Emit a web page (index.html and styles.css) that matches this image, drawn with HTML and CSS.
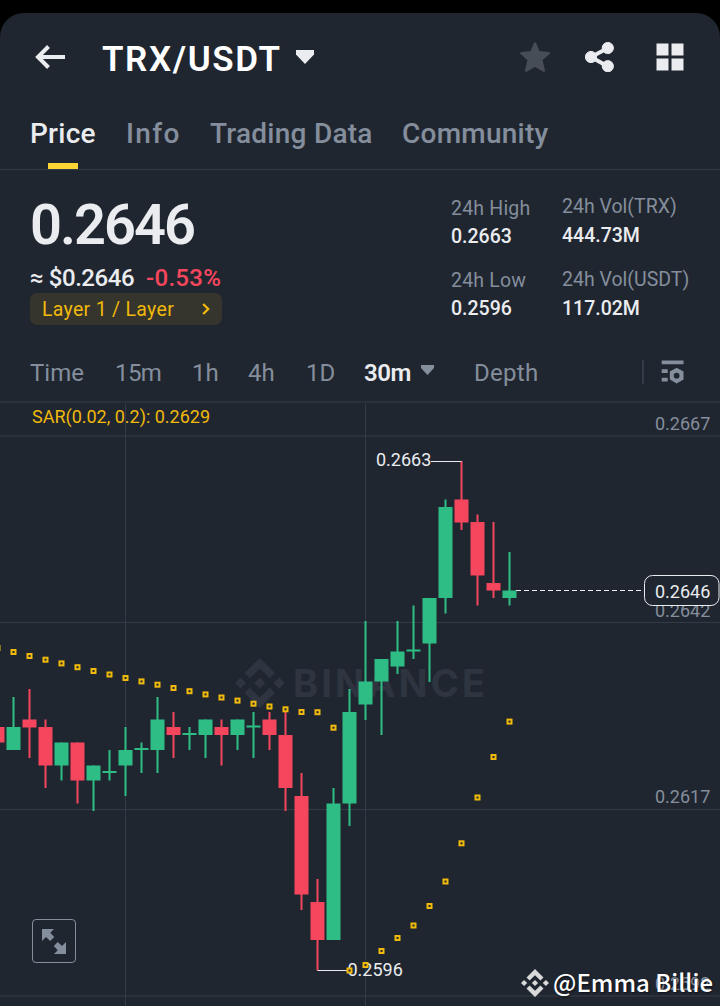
FILE: index.html
```html
<!DOCTYPE html>
<html lang="en">
<head>
  <meta charset="UTF-8">
  <title>TRX/USDT</title>
  <meta name="viewport" content="width=device-width, initial-scale=1">
  <link rel="stylesheet" href="styles.css">
</head>
<body>

  <main class="screen">
    <header class="header">
      <svg class="back" width="30" height="24" viewBox="0 0 30 24" fill="none" stroke="#eaecef" stroke-width="4">
        <path d="M30 12H3M13.5 1.5L3 12L13.5 22.5"/>
      </svg>
      <h1 class="pair">TRX/USDT</h1>
      <svg class="pair-arrow" width="18" height="14" viewBox="0 0 18 14" fill="#eaecef">
        <path d="M0 0H18V4.5L9 14L0 4.5Z"/>
      </svg>
      <div class="actions">
        <svg width="30" height="30" viewBox="0 0 30 30" fill="#474d57" stroke="#474d57" stroke-width="2.4" stroke-linejoin="round">
          <path d="M15 1.5L18.7 10.1L28.7 11.2L21.3 17.7L23.8 28.6L15 23.4L6.2 28.6L8.7 17.7L1.3 11.2L11.3 10.1Z"/>
        </svg>
        <svg width="30" height="30" viewBox="0 0 30 30" fill="#eaecef" stroke="#eaecef">
          <path d="M23 6L6 15L23 24.5" fill="none" stroke-width="4"/>
          <circle cx="22.8" cy="6" r="5.6"/>
          <circle cx="6" cy="15" r="5.6"/>
          <circle cx="22.8" cy="24.2" r="5.6"/>
        </svg>
        <svg width="28" height="28" viewBox="0 0 28 28" fill="#eaecef">
          <path d="M.5 .5H12.5V12.5H.5ZM15.5 .5H27.5V12.5H15.5ZM.5 15.5H12.5V27.5H.5ZM15.5 15.5H27.5V27.5H15.5Z"/>
        </svg>
      </div>
    </header>

    <nav class="tabs">
      <a class="tab active">Price</a>
      <a class="tab tab-info">Info</a>
      <a class="tab tab-trading">Trading Data</a>
      <a class="tab tab-community">Community</a>
    </nav>

    <section class="ticker">
      <div class="last">
        <div class="last-price">0.2646</div>
        <div class="last-sub"><span class="fiat">≈ $0.2646</span><span class="change">-0.53%</span></div>
        <div class="tag">
          <span>Layer 1 / Layer</span>
          <svg width="8" height="12" viewBox="0 0 8 12" fill="none" stroke="#f0b90b" stroke-width="2.3"><path d="M1.2 1L6.2 6L1.2 11"/></svg>
        </div>
      </div>
      <div class="stats stats-range">
        <div class="label">24h High</div>
        <div class="value">0.2663</div>
        <div class="label">24h Low</div>
        <div class="value">0.2596</div>
      </div>
      <div class="stats stats-volume">
        <div class="label">24h Vol(TRX)</div>
        <div class="value">444.73M</div>
        <div class="label">24h Vol(USDT)</div>
        <div class="value">117.02M</div>
      </div>
    </section>

    <nav class="intervals">
      <span class="time">Time</span>
      <span class="m15">15m</span>
      <span class="h1">1h</span>
      <span class="h4">4h</span>
      <span class="d1">1D</span>
      <span class="current">30m</span>
      <svg class="more" width="13" height="10" viewBox="0 0 13 10" fill="#848e9c"><path d="M0 0H13V3L6.5 10L0 3Z"/></svg>
      <span class="depth">Depth</span>
      <svg class="settings" width="24" height="24" viewBox="0 0 24 24" fill="#848e9c">
        <path d="M.7 0H23.5V4H.7ZM.7 9H7V13H.7ZM.7 18H7V22H.7Z"/>
        <path fill-rule="evenodd" d="M16.3 7.5L23.5 11.6V19.8L16.3 24L9.2 19.8V11.6ZM16.3 12.8A3 3 0 1 0 16.3 18.8A3 3 0 1 0 16.3 12.8Z"/>
      </svg>
    </nav>

    <section class="chart">
      <svg class="plot" width="720" height="603" viewBox="0 403 720 603">
        <g class="grid">
          <path class="grid-thick" d="M0 436H720M0 996H720"/>
          <path d="M0 622.5H720M0 809.5H720M125.5 403V1006M365.5 403V1006"/>
        </g>
        <g class="watermark">
          <path d="M259.8 658L275 673L269.8 678.2L259.8 668.4L249.8 678.2L244.6 673ZM259.8 708L275 693L269.8 687.8L259.8 697.6L249.8 687.8L244.6 693ZM259.8 677.5L265.3 683L259.8 688.5L254.3 683ZM240.5 677.5L246 683L240.5 688.5L235 683ZM279.2 677.5L284.7 683L279.2 688.5L273.7 683Z"/>
          <text x="293" y="697" textLength="192">BINANCE</text>
        </g>
        <g id="candles"></g>
        <path class="guide" d="M431 461.5H461.5M317.5 970.5H348"/>
        <path class="guide dashed" d="M516 590.5H644"/>
        <text class="extreme" x="376" y="466">0.2663</text>
        <text class="extreme" x="347.5" y="976">0.2596</text>
        <text class="sar-label" x="32" y="423" textLength="178">SAR(0.02, 0.2): 0.2629</text>
        <g class="axis">
          <text x="655" y="430">0.2667</text>
          <text x="655" y="617">0.2642</text>
          <text x="655" y="803">0.2617</text>
          <text x="655" y="990">0.2592</text>
        </g>
        <g id="sar"></g>
        <rect class="price-box" x="644.5" y="575.5" width="74.5" height="30" rx="8"/>
        <text class="extreme" x="655" y="598">0.2646</text>
      </svg>

      <button class="expand">
        <svg width="24" height="25" viewBox="0 0 24 25" fill="#848e9c">
          <path d="M0 0H12L8.3 3.7L12.2 8L8.2 12L4 7.9L0 12ZM24 25H12L15.7 21.3L11.8 17L15.8 13L20 17.1L24 13Z"/>
        </svg>
      </button>

      <div class="author">
        <svg width="28" height="28" viewBox="0 0 28 28" fill="#d9d9d9">
          <path d="M14 0L22.5 8.5L19.4 11.6L14 6.2L8.6 11.6L5.5 8.5ZM14 28L22.5 19.5L19.4 16.4L14 21.8L8.6 16.4L5.5 19.5ZM14 10.9L17.1 14L14 17.1L10.9 14ZM3.1 10.9L6.2 14L3.1 17.1L0 14ZM24.9 10.9L28 14L24.9 17.1L21.8 14Z"/>
        </svg>
        <span>@Emma Billie</span>
      </div>
    </section>
  </main>

  <script>
    // top wick, body top, body bottom, low wick, up?
    const candles = [
      [727, 727, 742.5, 742.5, 0],
      [697, 727, 750, 750, 1],
      [689, 719.5, 727.5, 758, 0],
      [719.5, 727, 765.5, 788, 0],
      [742.5, 742.5, 765.5, 780.5, 1],
      [742.5, 742.5, 780.5, 803.5, 0],
      [765.5, 765.5, 780.5, 811, 1],
      [750, 771, 773, 780.5, 1],
      [727, 750, 765.5, 796, 1],
      [742.5, 748, 750, 773, 1],
      [697, 719.5, 750, 773, 1],
      [712, 727, 735, 758, 0],
      [727, 733, 735, 750, 1],
      [719.5, 719.5, 735, 758, 1],
      [719.5, 727, 735, 765.5, 0],
      [719.5, 719.5, 735, 750, 1],
      [712, 725.5, 727.5, 758, 1],
      [712, 719.5, 735, 750, 0],
      [711, 735, 788, 811, 0],
      [773, 796, 894.5, 910, 0],
      [879, 902, 940, 970.5, 0],
      [788, 803.5, 940, 940, 1],
      [689, 712, 803.5, 826, 1],
      [621, 681.5, 704.5, 720, 1],
      [659, 659, 681.5, 735, 1],
      [621, 651.5, 666.5, 674, 1],
      [605.5, 649.5, 651.5, 659, 1],
      [598, 598, 643.5, 682, 1],
      [499.5, 507, 598, 613.5, 1],
      [461, 499.5, 522.5, 530, 0],
      [514.5, 522, 575.5, 605.5, 0],
      [522, 583, 590.5, 598, 0],
      [552, 590.5, 598, 605.5, 1]
    ];

    const sar = [
      648, 652, 656, 659.7, 663.4, 667.2, 671, 674.5, 678, 681.4, 684.7,
      688, 691.2, 694.4, 697.5, 700.6, 703.7, 706.5, 709.3, 712, 712.2,
      727.7, 970.5, 965, 951, 938, 925.5, 906, 881.5, 843.3, 797.5, 757, 721.6
    ];

    const FIRST_X = -2.5;
    const STEP = 16;
    let bars = "";
    let dots = "";

    candles.forEach(([high, top, bottom, low, up], i) => {
      const x = FIRST_X + i * STEP;
      bars += `<g class="${up ? "up" : "down"}">
        <rect x="${x - 1}" y="${high}" width="2" height="${low - high}"/>
        <rect x="${x - 7}" y="${top}" width="14" height="${bottom - top}"/></g>`;
      dots += `<rect x="${x - 2}" y="${sar[i] - 2}" width="4" height="4"/>`;
    });

    document.getElementById("candles").innerHTML = bars;
    document.getElementById("sar").innerHTML = dots;
  </script>
</body>
</html>
```

FILE: styles.css
```css
* {
  box-sizing: border-box;
}

body {
  margin: 0;
  padding-top: 13px;
  background: #000;
  color: #eaecef;
  font-family: Roboto, "Noto Sans", sans-serif;
}

svg {
  display: block;
  flex: none;
}

.screen {
  width: 720px;
  height: 993px;
  display: flex;
  flex-direction: column;
  overflow: hidden;
  background: #202630;
  border-radius: 24px 24px 0 0;
}

/* header */
.header {
  height: 88px;
  padding: 0 36px 0 35px;
  display: flex;
  align-items: center;
}

.pair {
  width: 183px;
  margin: 5px 11px 0 37px;
  color: #fff;
  font-size: 35px;
  font-weight: 600;
  line-height: 40px;
  letter-spacing: 1.6px;
  white-space: nowrap;
}

.actions {
  margin-left: auto;
  display: flex;
  align-items: center;
}
.actions svg {
  margin-left: 35px;
}
.actions svg:last-child {
  margin-left: 41px;
}

/* tabs */
.tabs {
  height: 69px;
  padding-left: 30px;
  display: flex;
  flex: none;
  border-bottom: 1px solid #333b47;
}

.tab {
  position: relative;
  height: 68px;
  margin-right: 31px;
  color: #848e9c;
  font-size: 28px;
  font-weight: 500;
  line-height: 66px;
  letter-spacing: 0.25px;
  white-space: nowrap;
}
.tab.active {
  width: 65px;
  color: #eaecef;
}
.tab.active::after {
  content: "";
  position: absolute;
  left: 18px;
  bottom: 0;
  width: 30px;
  height: 6px;
  background: #fcd535;
}
.tab-info {
  width: 53px;
  letter-spacing: 1.4px;
}
.tab-trading {
  width: 161px;
}
.tab-community {
  width: 147px;
}

/* price and 24h numbers */
.ticker {
  height: 172px;
  display: flex;
  flex: none;
  white-space: nowrap;
}

.last {
  width: 451px;
  padding: 21px 0 0 30px;
}
.last-price {
  height: 68px;
  font-size: 56px;
  font-weight: 600;
  line-height: 69px;
  letter-spacing: -2px;
}
.last-sub {
  height: 34px;
  display: flex;
  font-size: 24px;
  font-weight: 500;
  line-height: 38px;
}
.fiat {
  width: 116px;
  letter-spacing: -0.45px;
}
.change {
  color: #f6465d;
  letter-spacing: 0.3px;
}

.tag {
  width: 192px;
  height: 32px;
  padding: 0 12px;
  display: flex;
  align-items: center;
  justify-content: space-between;
  color: #f0b90b;
  background: #35342d;
  border-radius: 7px;
  font-size: 19.5px;
  letter-spacing: 0.3px;
}

.stats {
  width: 111px;
  padding-top: 25px;
}
.stats-volume {
  width: 158px;
  padding-top: 23px;
}
.label {
  height: 28px;
  color: #848e9c;
  font-size: 19.5px;
  line-height: 28px;
}
.stats-range .label {
  letter-spacing: 0.2px;
}
.value {
  height: 28px;
  margin-bottom: 16px;
  font-size: 19.5px;
  font-weight: 500;
  line-height: 28px;
}
.stats-volume .value {
  margin-bottom: 17px;
  line-height: 30px;
}

/* chart intervals */
.intervals {
  height: 61px;
  padding-left: 30px;
  display: flex;
  flex: none;
  align-items: center;
  color: #848e9c;
  font-size: 24px;
  border-bottom: 2px solid #2b313b;
}
.intervals span {
  padding-top: 2px;
}
.time {
  width: 85px;
}
.m15 {
  width: 77px;
  letter-spacing: -0.6px;
}
.h1 {
  width: 56px;
}
.h4 {
  width: 58px;
}
.d1 {
  width: 58px;
}
.current {
  width: 57px;
  color: #eaecef;
  font-weight: 600;
  letter-spacing: -0.4px;
}
.more {
  margin-top: -3px;
}
.depth {
  width: 168px;
  margin-left: 40px;
  letter-spacing: 0.3px;
}
.settings {
  width: 42px;
  height: 24px;
  padding-left: 17px;
  border-left: 2px solid #333b47;
}

/* candlestick chart */
.chart {
  position: relative;
  height: 603px;
  flex: none;
}

.grid path {
  stroke: #333b47;
  fill: none;
}
.grid .grid-thick {
  stroke: #2b313b;
  stroke-width: 2;
}

.watermark {
  fill: #2f3540;
}

.up {
  fill: #2ebd85;
}
.down {
  fill: #f6465d;
}

#sar rect {
  fill: #202630;
  stroke: #f0b90b;
  stroke-width: 2;
}

.guide {
  fill: none;
  stroke: #eaecef;
}
.dashed {
  stroke-dasharray: 5 3;
}

.plot text {
  font-size: 18px;
}
.plot .watermark text {
  font-family: Inter, sans-serif;
  font-size: 38px;
  font-weight: 700;
}
.extreme {
  fill: #eaecef;
}
.sar-label {
  fill: #f0b90b;
}
.axis {
  fill: #848e9c;
}
.price-box {
  fill: #202630;
  stroke: #eaecef;
}

/* controls over the chart */
.expand {
  position: absolute;
  left: 32px;
  bottom: 43px;
  width: 44px;
  height: 44px;
  padding: 0;
  display: flex;
  align-items: center;
  justify-content: center;
  background: none;
  border: 1px solid #848e9c;
  border-radius: 4px;
}

.author {
  position: absolute;
  right: 7px;
  bottom: 5px;
  display: flex;
  align-items: center;
  gap: 4px;
  color: #fff;
  font-family: "Noto Sans CJK SC", sans-serif;
  font-size: 24px;
  font-weight: 500;
  line-height: 38px;
  text-shadow: 1px 1px 2px rgba(0, 0, 0, 0.6);
}
.author span {
  margin-top: -2px;
}
```
